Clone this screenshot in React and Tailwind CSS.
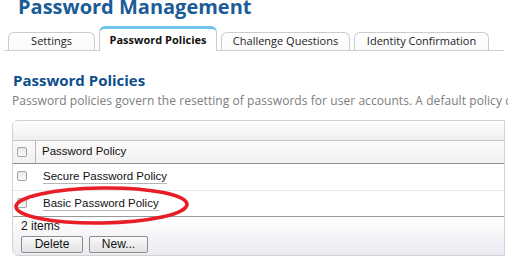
import React from "react";

function Checkbox() {
  return (
    <div className="w-[10px] h-[10px] rounded-[2px] border border-[#a4a4a4] bg-gradient-to-b from-[#e6e6e6] to-[#fafafa]" />
  );
}

export default function App() {
  const sans = { fontFamily: '"Open Sans", "Liberation Sans", sans-serif' };
  const tbl = { fontFamily: '"Liberation Sans", Arial, sans-serif' };
  return (
    <div className="relative w-[508px] h-[261px] overflow-hidden bg-white" style={sans}>
      <div className="mt-[-3px] pl-[18px] text-[20px] leading-[20px] font-bold text-[#1a5b98] whitespace-nowrap">
        Password Management
      </div>
      <div className="mt-[9px] mx-[4px] w-[500px] h-[25px] flex items-end gap-[4px] pl-[4px] border-b border-[#cfcfcf] text-[11px] text-[#222]">
        <div className="w-[87px] h-[18px] flex items-center justify-center border border-b-0 border-[#cccccc] rounded-t-[6px] bg-gradient-to-b from-white to-[#fafafa]">
          Settings
        </div>
        <div className="w-[118px] h-[25px] mb-[-1px] flex items-center justify-center border border-b-0 border-[#cccccc] border-t-[3px] border-t-[#71c2ec] rounded-t-[6px] bg-white font-bold text-[#111]">
          Password Policies
        </div>
        <div className="w-[129px] h-[18px] flex items-center justify-center border border-b-0 border-[#cccccc] rounded-t-[6px] bg-gradient-to-b from-white to-[#fafafa]">
          Challenge Questions
        </div>
        <div className="w-[135px] h-[18px] flex items-center justify-center border border-b-0 border-[#cccccc] rounded-t-[6px] bg-gradient-to-b from-white to-[#fafafa]">
          Identity Confirmation
        </div>
      </div>
      <div className="mt-[19px] pl-[13px] text-[15px] leading-[20px] font-bold text-[#0f4f8c]">
        Password Policies
      </div>
      <div className="mt-[3px] pl-[12px] text-[12px] leading-[16px] text-[#7d7d7d] whitespace-nowrap tracking-[0.06px]">
        Password policies govern the resetting of passwords for user accounts. A default policy cannot be deleted.
      </div>
      <div
        className="mt-[11px] ml-[12px] w-[493px] h-[136px] flex flex-col border border-[#d2d2d2] rounded-l-[6px] overflow-hidden text-[11.5px] text-[#111]"
        style={tbl}
      >
        <div className="h-[20px] shrink-0 bg-gradient-to-b from-white to-[#eeeef2] border-b border-[#c4c4c4]" />
        <div className="h-[23px] shrink-0 flex items-stretch bg-gradient-to-b from-[#fbf9f9] to-[#f3f0f3] border-b border-[#8e8e8e]">
          <div className="w-[23px] border-r border-[#b8b8b8] flex items-center pl-[4px]">
            <Checkbox />
          </div>
          <div className="flex items-center pl-[6px]">Password Policy</div>
        </div>
        <div className="h-[27px] shrink-0 flex items-center border-b border-[#e6e6e6] bg-white">
          <div className="w-[24px] pl-[4px] self-start pt-[7px]">
            <Checkbox />
          </div>
          <div className="pl-[6px]">
            <span className="border-b border-[#b5b5b5] pb-[1px]">Secure Password Policy</span>
          </div>
        </div>
        <div className="h-[26px] shrink-0 flex items-center border-b border-[#9a9a9a] bg-white">
          <div className="w-[24px] pl-[4px] self-start pt-[7px]">
            <Checkbox />
          </div>
          <div className="pl-[6px]">
            <span className="border-b border-[#b5b5b5] pb-[1px]">Basic Password Policy</span>
          </div>
        </div>
        <div className="flex-1 flex flex-col bg-gradient-to-b from-white to-[#ebeaf2] pl-[8px]">
          <div className="text-[12px] leading-[14px] mt-[2px]">2 items</div>
          <div className="flex gap-[6px] mt-[3px]">
            <button className="w-[62px] h-[17px] border border-[#8c8c8c] rounded-[2px] bg-gradient-to-b from-[#fafafa] to-[#e2e2e2] text-[12px] leading-[15px] text-[#111]">
              Delete
            </button>
            <button className="w-[59px] h-[17px] border border-[#8c8c8c] rounded-[2px] bg-gradient-to-b from-[#fafafa] to-[#e2e2e2] text-[12px] leading-[15px] text-[#111]">
              New...
            </button>
          </div>
        </div>
      </div>
      <svg className="absolute left-[12px] top-[185px]" width="180" height="42" viewBox="0 0 180 42">
        <ellipse cx="89.5" cy="20.5" rx="85.5" ry="17.5" fill="none" stroke="#e81d25" strokeWidth="3.6" transform="rotate(-0.8 89.5 20.5)" />
      </svg>
    </div>
  );
}
